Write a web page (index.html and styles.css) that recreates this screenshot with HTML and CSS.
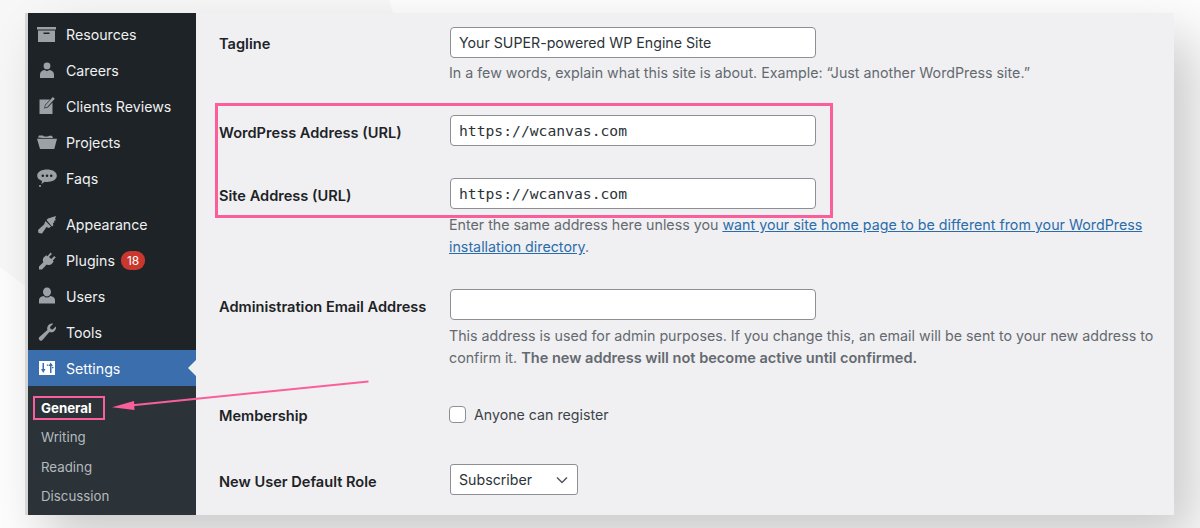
FILE: index.html
```html
<!DOCTYPE html>
<html lang="en">
<head>
<meta charset="utf-8">
<title>General Settings</title>
<link rel="stylesheet" href="styles.css">
</head>
<body>
<svg class="backdrop" viewBox="0 0 1200 528" aria-hidden="true"><polygon points="0,0 389,0 393,13 393,300 25,286 0,267" fill="#f7f7f7"/></svg>
<div class="window">
  <aside class="sidebar">
    <nav class="menu">
      <a class="item"><svg class="icon" viewBox="0 0 20 20"><path d="M0 2h19v2.600H0zM1 5.500h17V17H1zM6.500 7.600v1.300h6V7.600z" fill-rule="evenodd"/></svg>Resources</a>
      <a class="item"><svg class="icon" viewBox="0 0 20 20"><path d="M10 1.500a3.400 3.400 0 1 1 0 6.800 3.400 3.400 0 0 1 0-6.800zM7.300 9l2 .8L8.800 17H3v-3.500C3 11 5 9.600 7.300 9zM12.700 9C15 9.600 17 11 17 13.500V17h-5.800l-.5-7.200zM9.300 10h1.400l.5 7H8.800z"/></svg>Careers</a>
      <a class="item"><svg class="icon" viewBox="0 0 20 20"><path d="M2.500 3.500h10.500L8 9l-.8 3.400L10.800 11.500l4.700-5V18h-13zM15.800 1l2 1.800-7.600 8.200-2.300.6.600-2.300z"/></svg>Clients Reviews</a>
      <a class="item"><svg class="icon" viewBox="0 0 20 20"><path d="M1 5.500 2 3.500h4l1 1h4l1-.8h3l1 2.300H6zM0 6.800h20L17.300 17H3z"/></svg>Projects</a>
      <a class="item"><svg class="icon" viewBox="0 0 20 20"><path fill-rule="evenodd" d="M10 1.500c5 0 9.800 2 9.800 6.300S15 14 10 14c-1 0-1.600 0-2.300-.2L4.500 16l.6-3C2.200 12 .2 10.300.2 7.800.2 3.500 5 1.500 10 1.500zM5.800 6.500a1.300 1.300 0 1 0 0 2.600 1.300 1.300 0 0 0 0-2.600zm4.200 0a1.300 1.300 0 1 0 0 2.600 1.300 1.300 0 0 0 0-2.600zm4.200 0a1.300 1.300 0 1 0 0 2.600 1.300 1.300 0 0 0 0-2.600z"/><path d="M3 17a1 1 0 1 1 0 2 1 1 0 0 1 0-2z"/></svg>Faqs</a>
      <div class="separator"></div>
      <a class="item"><svg class="icon" viewBox="0 0 20 20"><path d="M11 3.500l8-2.500-1 3 1 1-2 1 .5 1.500-1.500.5.300 2.500-1.300 1L9.500 5zM8.500 6l5.500 5.500-2 1.500-2.500-1L5 18.500 1.500 18 1 15l6-5.500z"/></svg>Appearance</a>
      <a class="item"><svg class="icon" viewBox="0 0 20 20"><path d="M13.500 1.500l1.500 1.400-3 3 2.300 2.200 3-3 1.400 1.500-3 3 1 1-2 2.500c-1.500 1.200-3.400 1.200-5 .4L5 18.500H2v-3l4.300-4.300c-.8-1.600-.7-3.500.5-5L9.300 4.200l1.200 1.100z"/></svg>Plugins<span class="badge">18</span></a>
      <a class="item"><svg class="icon" viewBox="0 0 20 20"><path d="M10 1.500c2.400 0 4 2 4 4.300S12.400 10.500 10 10.500 6 8.100 6 5.800 7.600 1.500 10 1.500zM6.700 10c1 1 2.100 1.500 3.300 1.500S12.300 11 13.300 10c2.700.5 4.700 1.800 4.700 4v3.500H2V14c0-2.200 2-3.500 4.700-4z"/></svg>Users</a>
      <a class="item"><svg class="icon" viewBox="0 0 20 20"><path d="M14.500 1.500c.6 0 1.200.1 1.700.3L13 5l.6 2 2 .6 3.200-3.200c.2.500.3 1.100.3 1.700A5 5 0 0 1 12.400 10L5.500 18a2 2 0 0 1-3-.1 2 2 0 0 1-.1-3L10.400 8a5 5 0 0 1 4.100-6.500z"/></svg>Tools</a>
      <a class="item current"><svg class="icon" viewBox="0 0 20 20"><path fill-rule="evenodd" d="M2 3h16v14H2zM5.500 5v6H4l2.300 4 2.200-4H7V5zM13 8v7h1.500V8H16l-2.300-3.500L11.500 8zM9.800 6.500v1.300h1.500V6.500zM15 9v1.300h1.500V9z"/></svg>Settings</a>
    </nav>
    <nav class="submenu">
      <a class="subitem active">General</a>
      <a class="subitem">Writing</a>
      <a class="subitem">Reading</a>
      <a class="subitem">Discussion</a>
    </nav>
  </aside>
  <main class="content">
    <div class="row">
      <label class="label label-high">Tagline</label>
      <input class="field" type="text" value="Your SUPER-powered WP Engine Site">
    </div>
    <p class="hint tagline-hint">In a few words, explain what this site is about. Example: “Just another WordPress site.”</p>
    <div class="row url-first">
      <label class="label">WordPress Address (URL)</label>
      <input class="field mono" type="text" value="https://wcanvas.com">
    </div>
    <div class="row url-second">
      <label class="label">Site Address (URL)</label>
      <input class="field mono" type="text" value="https://wcanvas.com">
    </div>
    <p class="hint">Enter the same address here unless you <a class="link">want your site home page to be different from your WordPress installation directory</a>.</p>
    <div class="row email">
      <label class="label">Administration Email Address</label>
      <input class="field" type="text">
    </div>
    <p class="hint">This address is used for admin purposes. If you change this, an email will be sent to your new address to confirm it. <strong>The new address will not become active until confirmed.</strong></p>
    <div class="row membership">
      <label class="label label-high">Membership</label>
      <span class="check"><span class="box"></span>Anyone can register</span>
    </div>
    <div class="row role">
      <label class="label">New User Default Role</label>
      <span class="select">Subscriber<svg class="chev" viewBox="0 0 12 8"><path d="M1 1.500l5 5 5-5" fill="none" stroke="#50575e" stroke-width="1.500"/></svg></span>
    </div>
  </main>
</div>
<div class="hl hl-urls"></div>
<div class="hl hl-general"></div>
<svg class="arrow" viewBox="0 0 1200 528" aria-hidden="true"><path d="M368.500 381.500 130 405.500" stroke="#fb5f9b" stroke-width="2" fill="none"/><polygon points="112,407.200 134,401 134.500,410" fill="#fb5f9b"/></svg>
</body>
</html>
```
FILE: styles.css
```css
* { box-sizing: border-box; }
html, body { margin: 0; height: 528px; overflow: hidden; }
body { background: #fdfdfd; font-family: Inter, "Liberation Sans", sans-serif; padding: 13px 26px 13px 25px; position: relative; }
.backdrop { position: absolute; left: 0; top: 0; width: 1200px; height: 528px; }
.window { position: relative; display: flex; height: 502px; background: #f0f0f2; border-left: 3px solid #d6d6d6; box-shadow: 20px 25px 50px rgba(0,0,0,.2); overflow: hidden; }
.sidebar { width: 168px; flex: none; background: #1d2327; color: #f0f0f1; font-size: 14.200px; }
.menu { padding-top: 4px; }
.item { display: flex; align-items: center; height: 35.800px; position: relative; padding-left: 9px; }
.icon { width: 20px; height: 20px; fill: #9ca1a7; margin-right: 9px; flex: none; }
.separator { height: 11px; }
.badge { background: #c9372f; color: #fff; border-radius: 9px; font-size: 12px; line-height: 19px; height: 19px; padding: 0 6px; margin-left: 6px; }
.current { background: #3a6ead; color: #fff; }
.current .icon { fill: #fff; }
.current::after { content: ""; position: absolute; right: 0; top: 50%; margin-top: -8px; border: 8px solid transparent; border-right-color: #f0f0f2; border-left-width: 0; }
.submenu { background: #2c3338; padding: 8px 0 0 13px; height: 130px; }
.subitem { display: block; height: 29.500px; line-height: 29.500px; color: #b4b9be; font-size: 13.300px; }
.active { color: #fff; font-weight: 700; }
.content { flex: 1; padding: 14px 0 0 23px; color: #1d2327; font-size: 14.200px; }
.row { display: flex; align-items: center; height: 31px; }
.label { width: 231px; flex: none; font-weight: 600; font-size: 14.600px; padding-top: 4px; }
.label-high { padding-top: 2px; }
.field { width: 366px; height: 31px; border: 1px solid #8c8f94; border-radius: 4px; background: #fff; padding: 0 8px; font: 14.200px Inter, "Liberation Sans", sans-serif; color: #2c3338; }
.mono { font-family: "DejaVu Sans Mono", monospace; font-size: 14.700px; }
.hint { margin: 5px 0 0 230px; width: 712px; color: #646970; line-height: 22px; font-size: 14.250px; }
.tagline-hint { margin-top: 4px; }
.hint strong { font-weight: 600; font-size: 14.550px; }
.link { color: #2a6cab; text-decoration: underline; }
.url-first { margin-top: 31px; }
.url-second { margin-top: 32px; }
.email { margin-top: 31px; }
.membership { margin-top: 30px; }
.check { display: flex; align-items: center; color: #3c434a; }
.box { width: 17px; height: 17px; border: 1px solid #8c8f94; border-radius: 4px; background: #fff; margin: 0 8px 0 -1px; }
.role { margin-top: 34px; }
.select { display: flex; align-items: center; justify-content: space-between; width: 128px; height: 31px; border: 1px solid #8c8f94; border-radius: 3px; background: #fff; padding: 0 9px 0 8px; color: #2c3338; }
.chev { width: 12px; height: 8px; }
.hl { position: absolute; border: 3px solid #fb5f9b; }
.hl-urls { left: 215px; top: 103px; width: 618px; height: 115px; }
.hl-general { left: 33px; top: 396px; width: 72px; height: 24px; border-width: 2px; }
.arrow { position: absolute; left: 0; top: 0; width: 1200px; height: 528px; }
```
